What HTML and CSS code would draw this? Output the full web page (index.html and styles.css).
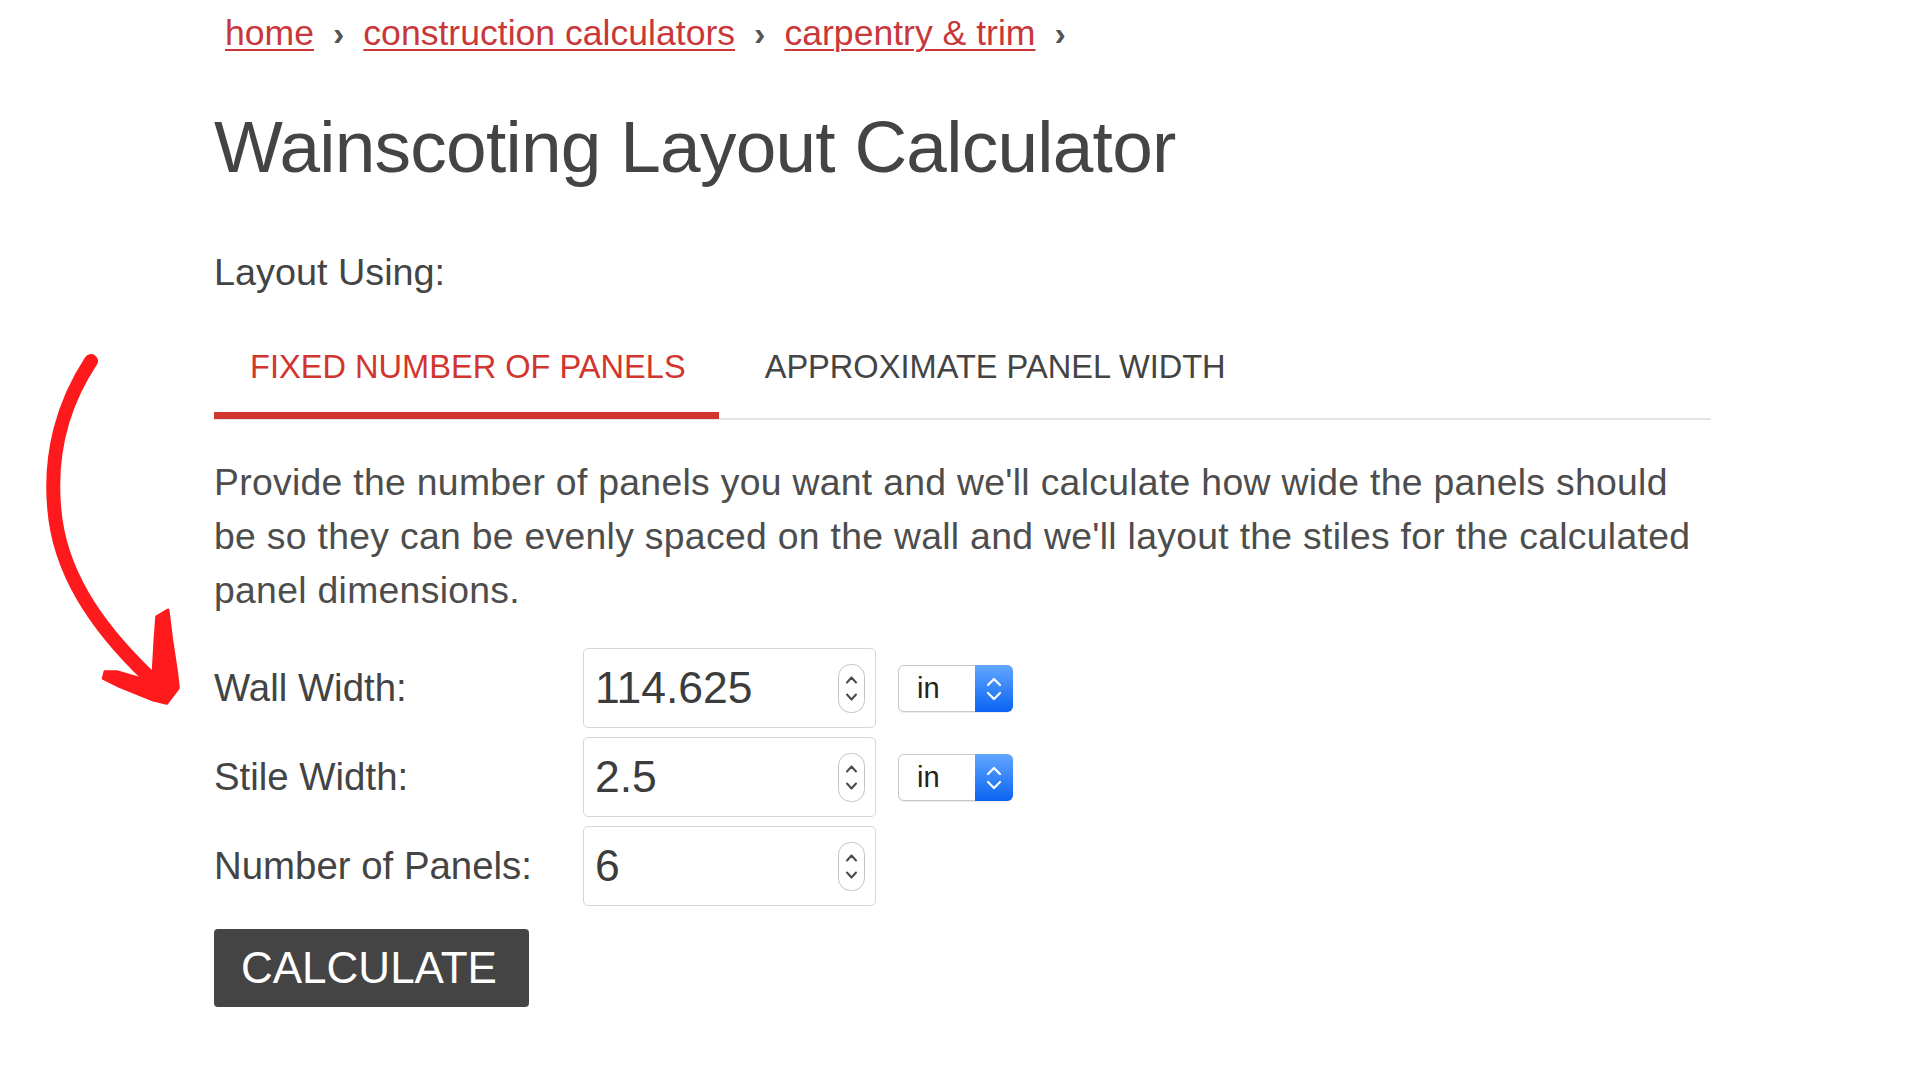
FILE: index.html
```html
<!DOCTYPE html>
<html lang="en">
<head>
<meta charset="utf-8">
<title>Wainscoting Layout Calculator</title>
<link rel="stylesheet" href="styles.css">
</head>
<body>
<div class="page">
  <svg class="arrow" viewBox="0 0 200 720" aria-hidden="true">
    <path class="arrow-shaft" d="M 91 361 C 62 405, 50 455, 54 505 C 58 570, 95 625, 148 676"/>
    <path class="arrow-head" d="M 168 610 L 171.7 640 L 176.7 673 L 178.3 688 L 166.7 703.3 L 153.3 700 L 120 686.7 L 103.3 678.3 L 105 671.7 L 116.7 671.7 L 145 680 L 153.3 670 L 155 640 L 156.7 616.7 Z"/>
  </svg>

  <main class="content">
    <nav class="breadcrumb">
      <a href="#">home</a><span class="sep">›</span>
      <a href="#">construction calculators</a><span class="sep">›</span>
      <a href="#">carpentry &amp; trim</a><span class="sep">›</span>
    </nav>

    <h1 class="title">Wainscoting Layout Calculator</h1>

    <div class="layout-label">Layout Using:</div>

    <div class="tabs">
      <div class="tab active">Fixed Number of Panels</div>
      <div class="tab">Approximate Panel Width</div>
    </div>

    <p class="desc">Provide the number of panels you want and we'll calculate how wide the panels should be so they can be evenly spaced on the wall and we'll layout the stiles for the calculated panel dimensions.</p>

    <form class="form">
      <label class="label" for="wall">Wall Width:</label>
      <div class="field">
        <input id="wall" class="field-input" type="text" value="114.625">
        <span class="spinner"><svg viewBox="0 0 27 49"><rect x="0.5" y="0.5" width="26" height="48" rx="12"/><polyline points="9,18.5 13.5,13.5 18,18.5"/><polyline points="9,30.5 13.5,35.5 18,30.5"/></svg></span>
      </div>
      <div class="select">
        <span class="select-value">in</span>
        <span class="select-arrow"><svg viewBox="0 0 37 47"><polyline points="12.5,20 18.5,14 24.5,20"/><polyline points="12.5,28 18.5,34 24.5,28"/></svg></span>
      </div>

      <label class="label" for="stile">Stile Width:</label>
      <div class="field">
        <input id="stile" class="field-input" type="text" value="2.5">
        <span class="spinner"><svg viewBox="0 0 27 49"><rect x="0.5" y="0.5" width="26" height="48" rx="12"/><polyline points="9,18.5 13.5,13.5 18,18.5"/><polyline points="9,30.5 13.5,35.5 18,30.5"/></svg></span>
      </div>
      <div class="select">
        <span class="select-value">in</span>
        <span class="select-arrow"><svg viewBox="0 0 37 47"><polyline points="12.5,20 18.5,14 24.5,20"/><polyline points="12.5,28 18.5,34 24.5,28"/></svg></span>
      </div>

      <label class="label" for="panels">Number of Panels:</label>
      <div class="field">
        <input id="panels" class="field-input" type="text" value="6">
        <span class="spinner"><svg viewBox="0 0 27 49"><rect x="0.5" y="0.5" width="26" height="48" rx="12"/><polyline points="9,18.5 13.5,13.5 18,18.5"/><polyline points="9,30.5 13.5,35.5 18,30.5"/></svg></span>
      </div>
      <div></div>
    </form>

    <button class="calc-btn" type="button">CALCULATE</button>
  </main>
</div>
</body>
</html>
```

FILE: styles.css
```css
html, body {
  margin: 0;
  padding: 0;
  background: #ffffff;
}

body {
  font-family: "Liberation Sans", Arial, Helvetica, sans-serif;
  color: #444444;
}

.page {
  position: relative;
  min-height: 1080px;
}

/* hand-drawn pointer on the left margin */
.arrow {
  position: absolute;
  left: 0;
  top: 0;
  width: 200px;
  height: 720px;
  overflow: visible;
}

.arrow-shaft {
  fill: none;
  stroke: #fe1a1c;
  stroke-width: 14;
  stroke-linecap: round;
}

.arrow-head {
  fill: #fe1a1c;
  stroke: #fe1a1c;
  stroke-width: 3;
  stroke-linejoin: round;
}

.content {
  margin-left: 214px;
  width: 1497px;
}

/* breadcrumb */
.breadcrumb {
  display: flex;
  align-items: center;
  padding: 12px 0 0 11px;
  font-size: 35.6px;
  line-height: 42px;
}

.breadcrumb a {
  color: #c9373a;
  text-decoration: underline;
  text-decoration-thickness: 2px;
  text-underline-offset: 4px;
}

.sep {
  margin: 0 19px;
  color: #555555;
  font-size: 34px;
  font-weight: 700;
}

/* heading */
.title {
  margin: 49px 0 0;
  font-size: 73px;
  font-weight: 400;
  line-height: 88px;
  letter-spacing: -0.75px;
  color: #444444;
}

.layout-label {
  margin-top: 59px;
  font-size: 37.8px;
  line-height: 45px;
  color: #444444;
}

/* tabs */
.tabs {
  display: flex;
  gap: 10px;
  margin-top: 32px;
  border-bottom: 2px solid #e3e3e3;
}

.tab {
  padding: 20px 33px 25px 36px;
  font-size: 32.6px;
  line-height: 40px;
  text-transform: uppercase;
  color: #444444;
}

.tab.active {
  color: #d0362e;
  border-bottom: 7px solid #d0362e;
  margin-bottom: -1px;
}

.desc {
  margin: 35px 0 0;
  font-size: 37.35px;
  line-height: 54px;
  letter-spacing: 0.3px;
  color: #4d4d4d;
}

/* form grid */
.form {
  display: grid;
  grid-template-columns: 369px 293px auto;
  row-gap: 9px;
  align-items: center;
  margin: 31px 0 0;
}

.label {
  font-size: 38.4px;
  color: #444444;
}

.field {
  display: flex;
  align-items: center;
  box-sizing: border-box;
  height: 80px;
  padding: 0 10px 0 11px;
  border: 1px solid #d6d6d6;
  border-radius: 5px;
  background: #ffffff;
}

.field-input {
  flex: 1;
  min-width: 0;
  padding: 0;
  border: none;
  outline: none;
  background: transparent;
  font-family: "Liberation Sans", Arial, Helvetica, sans-serif;
  font-size: 44.5px;
  color: #3c3c3c;
}

.spinner {
  flex: none;
  width: 27px;
  height: 49px;
}

.spinner svg {
  display: block;
  width: 27px;
  height: 49px;
}

.spinner rect {
  fill: #ffffff;
  stroke: #c4c4c4;
  stroke-width: 1;
}

.spinner polyline {
  fill: none;
  stroke: #4a4a4a;
  stroke-width: 2;
  stroke-linecap: round;
  stroke-linejoin: round;
}

/* unit select */
.select {
  display: flex;
  box-sizing: border-box;
  width: 115px;
  height: 47px;
  margin-left: 22px;
  border: 1px solid #c9c9c9;
  border-radius: 6px;
  background: #ffffff;
  box-shadow: 0 1px 1px rgba(0, 0, 0, 0.08);
}

.select-value {
  flex: 1;
  display: flex;
  align-items: center;
  padding-left: 18px;
  font-size: 29px;
  color: #222222;
}

.select-arrow {
  flex: none;
  width: 38px;
  margin: -1px -1px -1px 0;
  border-radius: 0 6px 6px 0;
  background: linear-gradient(#62a6ff, #0a64f2);
}

.select-arrow svg {
  display: block;
  width: 38px;
  height: 47px;
}

.select-arrow polyline {
  fill: none;
  stroke: #ffffff;
  stroke-width: 2.2;
  stroke-linecap: round;
  stroke-linejoin: round;
}

/* submit */
.calc-btn {
  display: block;
  height: 78px;
  margin-top: 23px;
  padding: 0 32px 0 27px;
  border: none;
  border-radius: 4px;
  background: #444444;
  color: #ffffff;
  font-family: "Liberation Sans", Arial, Helvetica, sans-serif;
  font-size: 44px;
  cursor: pointer;
}
```
